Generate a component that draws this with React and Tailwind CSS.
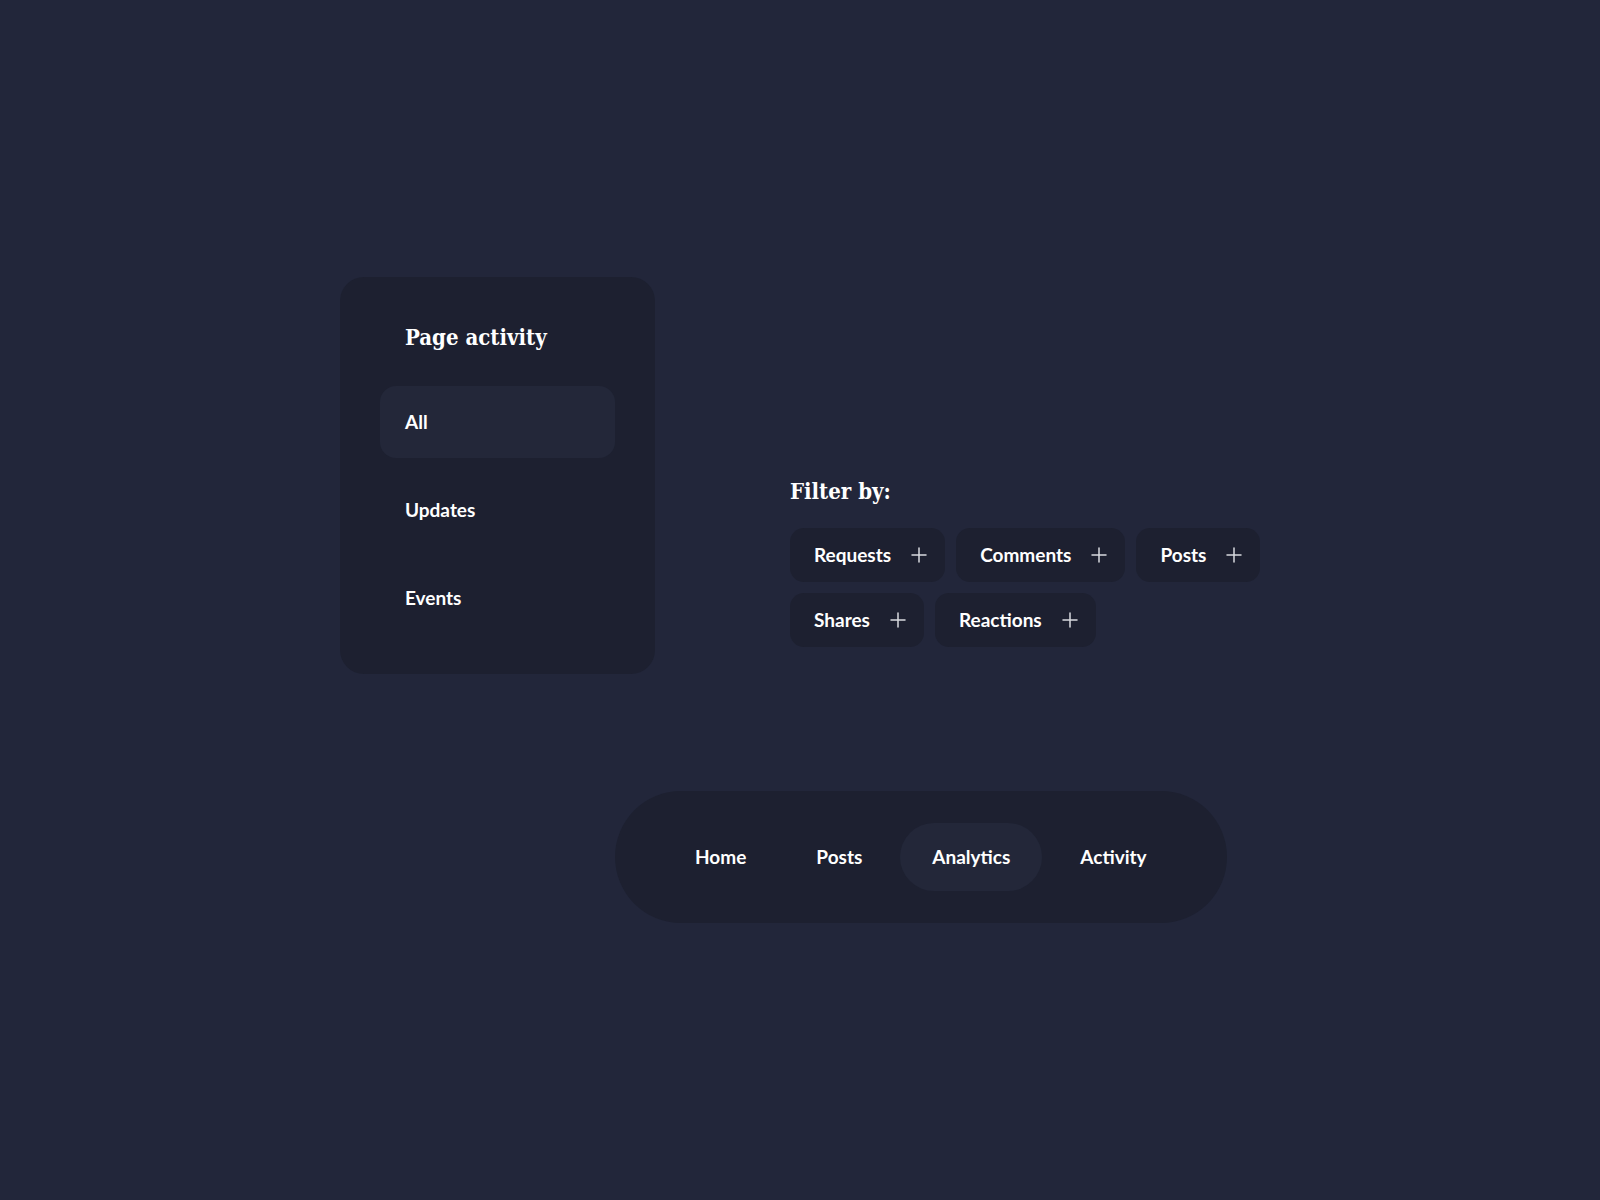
import React from 'react';

const serif = "font-['DejaVu_Serif_Condensed','DejaVu_Serif',serif]";
const sans = "font-['Lato','Noto_Sans',sans-serif]";

const PlusIcon = () => (
  <svg width="16" height="16" viewBox="0 0 16 16" fill="none" stroke="currentColor" strokeWidth="1.5" strokeLinecap="round">
    <path d="M8 1v14M1 8h14" />
  </svg>
);

const ActivityCard = () => {
  const items = ['All', 'Updates', 'Events'];
  return (
    <div className="w-[315px] shrink-0 rounded-[24px] bg-[#1d2030] p-10">
      <h2 className={`${serif} px-[25px] text-[22px] font-bold leading-10 text-white`}>Page activity</h2>
      <ul className="mt-[29px] flex flex-col gap-4">
        {items.map((item, idx) => (
          <li
            key={item}
            className={`flex h-[72px] items-center rounded-2xl px-[25px] text-[19px] font-bold text-white ${idx === 0 ? 'bg-[#232739]' : ''}`}
          >
            {item}
          </li>
        ))}
      </ul>
    </div>
  );
};

const FilterChips = () => {
  const rows = [
    ['Requests', 'Comments', 'Posts'],
    ['Shares', 'Reactions'],
  ];
  return (
    <div className="mt-[198px]">
      <h3 className={`${serif} text-[22px] font-bold leading-8 text-white`}>Filter by:</h3>
      <div className="mt-[21px] flex flex-col gap-[11px]">
        {rows.map((row, r) => (
          <div key={r} className="flex gap-[11px]">
            {row.map((label) => (
              <button
                key={label}
                className="flex h-[54px] items-center gap-5 rounded-[14px] bg-[#1d2030] pl-6 pr-[18px] text-[19px] font-bold text-white"
              >
                {label}
                <span className="text-[#d8d9de]">
                  <PlusIcon />
                </span>
              </button>
            ))}
          </div>
        ))}
      </div>
    </div>
  );
};

const NavPill = () => {
  const links = ['Home', 'Posts', 'Analytics', 'Activity'];
  return (
    <nav className="ml-[275px] mt-[117px] flex w-fit items-center gap-1.5 rounded-full bg-[#1d2030] px-12 py-8">
      {links.map((link) => (
        <a
          key={link}
          className={`flex h-[68px] items-center rounded-full px-8 text-[19px] font-bold text-white ${link === 'Analytics' ? 'bg-[#232739]' : ''}`}
        >
          {link}
        </a>
      ))}
    </nav>
  );
};

export default function App() {
  return (
    <div className={`${sans} flex min-h-screen items-center justify-center bg-[#22263a]`}>
      <div className="w-[920px]">
        <div className="flex gap-[135px]">
          <ActivityCard />
          <FilterChips />
        </div>
        <NavPill />
      </div>
    </div>
  );
}
